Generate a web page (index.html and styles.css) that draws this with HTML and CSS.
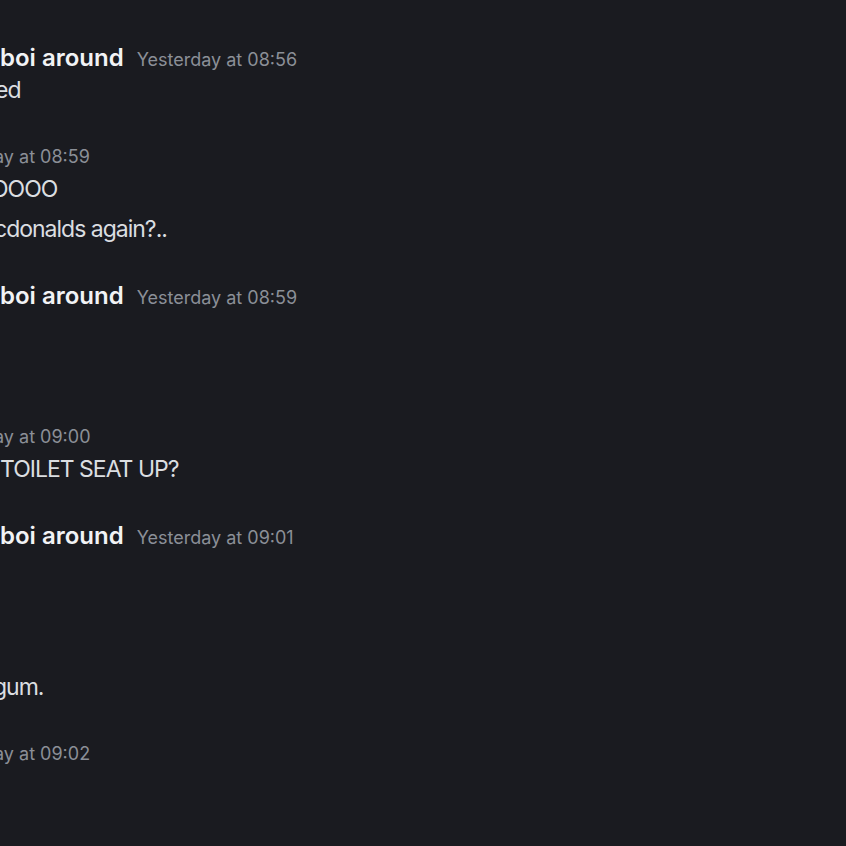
FILE: index.html
```html
<!DOCTYPE html>
<html lang="en">

<head>
    <meta charset="UTF-8">
    <meta name="viewport" content="width=device-width, initial-scale=1.0">
    <title>Chat</title>
    <link rel="stylesheet" href="styles.css">
</head>

<body>

    <main class="chat">
        <div class="group">
            <div class="msg">
                <div class="header"><span class="name">boi around</span><time>Yesterday at 08:56</time></div>
                <div class="text cut-xs">ed</div>
            </div>
        </div>

        <div class="group">
            <div class="msg">
                <div class="header"><time class="cut-s">ay at 08:59</time></div>
                <div class="text cut-l">OOOO</div>
            </div>
            <div class="msg">
                <div class="text cut-s">cdonalds again?..</div>
            </div>
        </div>

        <div class="group">
            <div class="msg">
                <div class="header"><span class="name">boi around</span><time>Yesterday at 08:59</time></div>
                <div class="media"></div>
            </div>
        </div>

        <div class="group">
            <div class="msg">
                <div class="header"><time class="cut-s">ay at 09:00</time></div>
                <div class="text">TOILET SEAT UP?</div>
            </div>
        </div>

        <div class="group">
            <div class="msg">
                <div class="header"><span class="name">boi around</span><time>Yesterday at 09:01</time></div>
                <div class="media tall"></div>
            </div>
            <div class="msg">
                <div class="text cut-m">gum.</div>
            </div>
        </div>

        <div class="group">
            <div class="msg">
                <div class="header"><time class="cut-s">ay at 09:02</time></div>
            </div>
        </div>
    </main>

</body>

</html>
```

FILE: styles.css
```css
:root {
    --bg: #1a1b20;
    --name: #f2f3f5;
    --text: #dbdee1;
    --muted: #8b8f97;
    --line: 33px;
}

body {
    margin: 0;
    overflow: hidden;
    background-color: var(--bg);
    height: 100vh;
    font-family: Inter, "Noto Sans", sans-serif;
}

.chat {
    display: flex;
    flex-direction: column;
    padding-top: 11px;
}

.group {
    margin-top: 26px;
}

.msg {
    padding: 3.5px 0;
}

.header {
    display: flex;
    align-items: baseline;
    height: var(--line);
    line-height: var(--line);
    white-space: nowrap;
}

.name {
    color: var(--name);
    font-size: 24px;
    font-weight: 600;
    margin-right: 13px;
}

.header time {
    color: var(--muted);
    font-size: 18px;
}

.text {
    color: var(--text);
    font-size: 23px;
    letter-spacing: -1px;
    line-height: var(--line);
    white-space: nowrap;
}

.media {
    height: 75px;
}

.media.tall {
    height: 112px;
}

/* first glyph sits under the left edge of the window */
.cut-xs {
    margin-left: -5px;
}

.cut-s {
    margin-left: -6px;
}

.cut-m {
    margin-left: -7px;
}

.cut-l {
    margin-left: -9px;
}
```
